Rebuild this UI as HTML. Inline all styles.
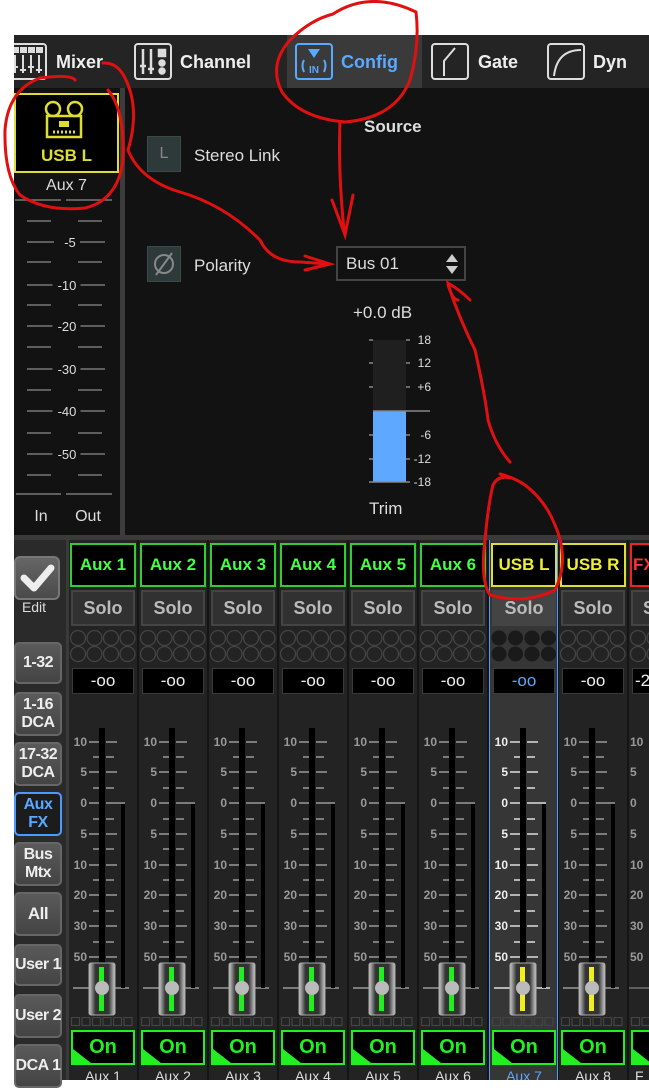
<!DOCTYPE html>
<html><head><meta charset="utf-8"><style>
*{margin:0;padding:0;box-sizing:border-box}
body{width:649px;height:1080px;overflow:hidden;background:#fff;font-family:"Liberation Sans",sans-serif;position:relative}
.a{position:absolute}
.ico{position:absolute;top:8px;width:38px;height:37px;border:2px solid #ddd;border-radius:4px}
.tt{position:absolute;top:16px;color:#eee;font-weight:bold;font-size:18px}
.lb{position:absolute;left:14px;width:48px;border:2px solid #666;border-radius:5px;background:linear-gradient(#5a5a5a,#444);color:#eee;font-weight:bold;font-size:16px;text-align:center;line-height:18px;display:flex;align-items:center;justify-content:center;letter-spacing:-0.5px;white-space:nowrap}
.st{position:absolute;top:540px;width:68px;height:540px;background:#232323;overflow:hidden}
.nm{position:absolute;left:1px;top:3px;width:66px;height:44px;border:2px solid #3c3;background:#000;color:#4f4;font-weight:bold;font-size:17px;text-align:center;line-height:40px;white-space:nowrap}
.so{position:absolute;left:2px;top:50px;width:64px;height:36px;border:2px solid #444;background:#313131;color:#bbb;font-weight:bold;font-size:18px;text-align:center;line-height:32px}
.va{position:absolute;left:3px;top:128px;width:62px;height:26px;border:1px solid #3a3a3a;background:#000;color:#eee;font-size:17px;text-align:center;line-height:24px}
.on{position:absolute;left:2px;top:490px;width:64px;height:35px;border:2px solid #2e2;background:#000;color:#2e2;font-weight:bold;font-size:20px;text-align:center;line-height:31px;overflow:hidden}
.on:after{content:"";position:absolute;left:0;bottom:0;border-left:18px solid #2e2;border-top:14px solid transparent}
.lab{position:absolute;left:0;width:68px;top:528px;color:#ddd;font-size:14px;text-align:center}
</style></head><body>
<svg width="0" height="0" style="position:absolute"><defs>
<g id="cir" fill="none" stroke="#444" stroke-width="1.3">
<circle cx="9" cy="8" r="7.5"/><circle cx="25.5" cy="8" r="7.5"/><circle cx="42" cy="8" r="7.5"/><circle cx="58.5" cy="8" r="7.5"/>
<circle cx="9" cy="24" r="7.5"/><circle cx="25.5" cy="24" r="7.5"/><circle cx="42" cy="24" r="7.5"/><circle cx="58.5" cy="24" r="7.5"/></g>
<g id="sq" fill="none" stroke="#444" stroke-width="1.2"><rect x="2.5" y="0.5" width="8" height="8"/><rect x="13" y="0.5" width="8" height="8"/><rect x="23.5" y="0.5" width="8" height="8"/><rect x="34" y="0.5" width="8" height="8"/><rect x="44.5" y="0.5" width="8" height="8"/><rect x="55" y="0.5" width="8" height="8"/></g>
<linearGradient id="kn" x1="0" x2="1"><stop offset="0" stop-color="#ccc"/><stop offset=".25" stop-color="#333"/><stop offset=".75" stop-color="#333"/><stop offset="1" stop-color="#ccc"/></linearGradient>
</defs></svg>

<!-- top bar -->
<div class="a" style="left:14px;top:35px;width:635px;height:53px;background:#242424"></div>
<div class="a" style="left:287px;top:35px;width:135px;height:53px;background:#3a3a3a"></div>
<div class="ico" style="left:8px;top:43px;width:39px">
<svg width="36" height="33"><g stroke="#ddd" stroke-width="2"><rect x="3" y="3" width="5" height="4" fill="#ddd"/><rect x="11" y="3" width="5" height="4" fill="#ddd"/><rect x="19" y="3" width="5" height="4" fill="#ddd"/><rect x="27" y="3" width="5" height="4" fill="#ddd"/><path d="M5 10v18M13 10v18M21 10v18M29 10v18M2 22h6M10 25h6M18 22h6M26 25h6"/></g></svg></div>
<div class="tt" style="left:56px;top:52px">Mixer</div>
<div class="ico" style="left:134px;top:43px"><svg width="34" height="33"><g stroke="#ddd" stroke-width="2.5" fill="#ddd"><path d="M7 4v25M15 4v25M4 21h6M12 24h6"/><rect x="23" y="5" width="6" height="6"/><circle cx="26" cy="18" r="2.5"/><circle cx="26" cy="26" r="2.5"/></g></svg></div>
<div class="tt" style="left:180px;top:52px">Channel</div>
<div class="ico" style="left:295px;top:43px;border-color:#5aa8ff"><svg width="34" height="33"><path d="M11 4h12l-6 9z" fill="#5aa8ff"/><text x="17" y="28" fill="#5aa8ff" font-size="10" font-weight="bold" text-anchor="middle" font-family="Liberation Sans">IN</text><path d="M7 15q-3 5 0 12M27 15q3 5 0 12" stroke="#5aa8ff" stroke-width="2" fill="none"/></svg></div>
<div class="tt" style="left:341px;top:52px;color:#5aa8ff">Config</div>
<div class="ico" style="left:431px;top:43px"><svg width="34" height="33"><path d="M11 31V16L22 3" stroke="#ddd" stroke-width="2" fill="none"/></svg></div>
<div class="tt" style="left:478px;top:52px">Gate</div>
<div class="ico" style="left:547px;top:43px"><svg width="34" height="33"><path d="M5 31Q8 5 32 5" stroke="#ddd" stroke-width="2" fill="none"/></svg></div>
<div class="tt" style="left:593px;top:52px">Dyn</div>

<!-- main -->
<div class="a" style="left:14px;top:88px;width:635px;height:449px;background:#121212"></div>
<div class="a" style="left:120px;top:88px;width:5px;height:449px;background:#3c3c3c"></div>
<div class="a" style="left:14px;top:535px;width:635px;height:5px;background:#3a3a3a"></div>
<div class="a" style="left:14px;top:93px;width:105px;height:80px;border:2px solid #dd3;background:#000"></div>
<svg class="a" style="left:44px;top:99px" width="42" height="42"><g stroke="#dd3" stroke-width="2.5" fill="none"><circle cx="9" cy="10" r="7"/><circle cx="31" cy="10" r="7"/><rect x="3" y="17" width="34" height="21"/></g><rect x="15" y="22" width="10" height="6" fill="#dd3"/><path d="M9 33h22" stroke="#dd3" stroke-width="3" stroke-dasharray="2 2"/></svg>
<div class="a" style="left:14px;top:146px;width:105px;text-align:center;color:#dd3;font-weight:bold;font-size:17px">USB L</div>
<div class="a" style="left:14px;top:177px;width:105px;text-align:center;color:#ddd;font-size:16px">Aux 7</div>
<svg class="a" style="left:14px;top:190px" width="106" height="345">
<g stroke="#777" stroke-width="1.5"><path d="M1 10h46M52 10h46M13 31h24M64 31h24M13 72h24M64 72h24M13 115h24M64 115h24M13 157h24M64 157h24M13 200h24M64 200h24M13 243h24M64 243h24M13 285h24M64 285h24M2 304h45M52 304h46"/>
<path d="M13 52h27M66 52h25M13 95h26M66 95h25M13 136h26M66 136h25M13 179h26M66 179h25M13 221h26M66 221h25M13 264h26M66 264h25"/></g>
<g font-size="13" font-family="Liberation Sans" text-anchor="middle"><g fill="#121212" stroke="#121212"><rect x="41" y="43" width="24" height="16"/><rect x="39" y="86" width="27" height="16"/><rect x="39" y="127" width="27" height="16"/><rect x="39" y="170" width="27" height="16"/><rect x="39" y="212" width="27" height="16"/><rect x="39" y="255" width="27" height="16"/></g><g fill="#ddd"><text x="56" y="57">-5</text><text x="53" y="100">-10</text><text x="53" y="141">-20</text><text x="53" y="184">-30</text><text x="53" y="226">-40</text><text x="53" y="269">-50</text></g></g>
<g fill="#ddd" font-size="16" font-family="Liberation Sans" text-anchor="middle"><text x="27" y="331">In</text><text x="74" y="331">Out</text></g></svg>

<div class="a" style="left:147px;top:136px;width:34px;height:36px;background:#2e3a3a;border:1px solid #3a4a4a;color:#888;font-size:16px;text-align:center;line-height:34px">L</div>
<div class="a" style="left:194px;top:146px;color:#ddd;font-size:17px">Stereo Link</div>
<div class="a" style="left:147px;top:246px;width:34px;height:36px;background:#2e3a3a;border:1px solid #3a4a4a"><svg width="32" height="34"><circle cx="16" cy="17" r="9" stroke="#888" stroke-width="2" fill="none"/><path d="M8 28L24 6" stroke="#888" stroke-width="2"/></svg></div>
<div class="a" style="left:194px;top:256px;color:#ddd;font-size:17px">Polarity</div>
<div class="a" style="left:364px;top:117px;color:#ddd;font-size:17px;font-weight:bold">Source</div>
<div class="a" style="left:336px;top:246px;width:130px;height:35px;border:2px solid #444;background:#111;color:#ddd;font-size:17px;line-height:31px;padding-left:8px">Bus 01</div>
<svg class="a" style="left:444px;top:253px" width="16" height="22"><path d="M2 9l6-8 6 8zM2 13l6 8 6-8z" fill="#ccc"/></svg>
<div class="a" style="left:353px;top:303px;color:#ddd;font-size:17px">+0.0 dB</div>
<svg class="a" style="left:360px;top:330px" width="90" height="160"><rect x="13" y="10" width="33" height="70" fill="#1f1f1f"/><rect x="13" y="81" width="33" height="71" fill="#5fa8ff"/>
<g stroke="#888" stroke-width="1.5"><path d="M9 10h4M46 10h4M9 33h4M46 33h4M9 57h4M46 57h4M13 81h57M9 105h4M46 105h4M9 129h4M46 129h4M9 152h41"/></g>
<g fill="#ddd" font-size="12" font-family="Liberation Sans" text-anchor="end"><text x="71" y="14">18</text><text x="71" y="37">12</text><text x="71" y="61">+6</text><text x="71" y="109">-6</text><text x="71" y="133">-12</text><text x="71" y="156">-18</text></g></svg>
<div class="a" style="left:369px;top:499px;color:#ddd;font-size:17px">Trim</div>

<!-- bottom -->
<div class="a" style="left:14px;top:540px;width:635px;height:540px;background:#151515"></div>
<div class="a" style="left:14px;top:540px;width:52px;height:540px;background:#2a2a2a"></div>
<div class="a" style="left:66px;top:540px;width:3px;height:540px;background:#3a3a3a"></div>
<div class="a" style="left:14px;top:556px;width:46px;height:44px;border-radius:6px;background:linear-gradient(#666,#4a4a4a);border:2px solid #777"><svg width="44" height="40"><path d="M8 20l10 10 17-20" stroke="#eee" stroke-width="7" fill="none" stroke-linecap="round" stroke-linejoin="round"/></svg></div>
<div class="a" style="left:14px;top:599px;width:40px;text-align:center;color:#ddd;font-size:14px">Edit</div>
<div class="lb" style="top:642px;height:42px">1-32</div>
<div class="lb" style="top:692px;height:44px">1-16<br>DCA</div>
<div class="lb" style="top:742px;height:44px">17-32<br>DCA</div>
<div class="lb" style="top:792px;height:44px;border-color:#4a9aff;color:#5aa8ff;background:#1c1c1c">Aux<br>FX</div>
<div class="lb" style="top:842px;height:44px">Bus<br>Mtx</div>
<div class="lb" style="top:892px;height:44px;font-size:17px">All</div>
<div class="lb" style="top:944px;height:42px">User 1</div>
<div class="lb" style="top:994px;height:44px">User 2</div>
<div class="lb" style="top:1044px;height:44px">DCA 1</div>

<div class="st" style="left:69px"><div class="nm">Aux 1</div><div class="so">Solo</div><svg class="a" style="top:90px" width="68" height="34"><use href="#cir"/></svg><div class="va">-oo</div>
<svg class="a" style="top:180px" width="68" height="300"><g stroke="#999" stroke-width="1.5"><path d="M20 22h10M37 22h11M20 52h10M37 52h11M20 83h10M37 83h11M20 114h10M37 114h11M20 145h10M37 145h11M20 175h10M37 175h11M20 206h10M37 206h11M20 237h10M37 237h11M24 37h6M37 37h8M24 68h6M37 68h8M24 99h6M37 99h8M24 129h6M37 129h8M24 160h6M37 160h8M24 191h6M37 191h8M24 222h6M37 222h8M37 83h19M4 268h56"/></g><rect x="30" y="8" width="6" height="262" fill="#000"/><rect x="52" y="84" width="4" height="184" fill="#000"/><g fill="#999" font-size="12" font-weight="bold" font-family="Liberation Sans" text-anchor="end"><text x="18" y="26">10</text><text x="18" y="56">5</text><text x="18" y="87">0</text><text x="18" y="118">5</text><text x="18" y="149">10</text><text x="18" y="179">20</text><text x="18" y="210">30</text><text x="18" y="241">50</text></g><rect x="20" y="243" width="26" height="52" rx="2" fill="url(#kn)" stroke="#aaa"/><rect x="30" y="247" width="5" height="44" fill="#2e2"/><circle cx="33" cy="268" r="7" fill="#bbb"/></svg>
<svg class="a" style="top:477px" width="68" height="10"><use href="#sq"/></svg><div class="on">On</div><div class="lab">Aux 1</div></div>

<div class="st" style="left:139px"><div class="nm">Aux 2</div><div class="so">Solo</div><svg class="a" style="top:90px" width="68" height="34"><use href="#cir"/></svg><div class="va">-oo</div>
<svg class="a" style="top:180px" width="68" height="300"><g stroke="#999" stroke-width="1.5"><path d="M20 22h10M37 22h11M20 52h10M37 52h11M20 83h10M37 83h11M20 114h10M37 114h11M20 145h10M37 145h11M20 175h10M37 175h11M20 206h10M37 206h11M20 237h10M37 237h11M24 37h6M37 37h8M24 68h6M37 68h8M24 99h6M37 99h8M24 129h6M37 129h8M24 160h6M37 160h8M24 191h6M37 191h8M24 222h6M37 222h8M37 83h19M4 268h56"/></g><rect x="30" y="8" width="6" height="262" fill="#000"/><rect x="52" y="84" width="4" height="184" fill="#000"/><g fill="#999" font-size="12" font-weight="bold" font-family="Liberation Sans" text-anchor="end"><text x="18" y="26">10</text><text x="18" y="56">5</text><text x="18" y="87">0</text><text x="18" y="118">5</text><text x="18" y="149">10</text><text x="18" y="179">20</text><text x="18" y="210">30</text><text x="18" y="241">50</text></g><rect x="20" y="243" width="26" height="52" rx="2" fill="url(#kn)" stroke="#aaa"/><rect x="30" y="247" width="5" height="44" fill="#2e2"/><circle cx="33" cy="268" r="7" fill="#bbb"/></svg>
<svg class="a" style="top:477px" width="68" height="10"><use href="#sq"/></svg><div class="on">On</div><div class="lab">Aux 2</div></div>

<div class="st" style="left:209px"><div class="nm">Aux 3</div><div class="so">Solo</div><svg class="a" style="top:90px" width="68" height="34"><use href="#cir"/></svg><div class="va">-oo</div>
<svg class="a" style="top:180px" width="68" height="300"><g stroke="#999" stroke-width="1.5"><path d="M20 22h10M37 22h11M20 52h10M37 52h11M20 83h10M37 83h11M20 114h10M37 114h11M20 145h10M37 145h11M20 175h10M37 175h11M20 206h10M37 206h11M20 237h10M37 237h11M24 37h6M37 37h8M24 68h6M37 68h8M24 99h6M37 99h8M24 129h6M37 129h8M24 160h6M37 160h8M24 191h6M37 191h8M24 222h6M37 222h8M37 83h19M4 268h56"/></g><rect x="30" y="8" width="6" height="262" fill="#000"/><rect x="52" y="84" width="4" height="184" fill="#000"/><g fill="#999" font-size="12" font-weight="bold" font-family="Liberation Sans" text-anchor="end"><text x="18" y="26">10</text><text x="18" y="56">5</text><text x="18" y="87">0</text><text x="18" y="118">5</text><text x="18" y="149">10</text><text x="18" y="179">20</text><text x="18" y="210">30</text><text x="18" y="241">50</text></g><rect x="20" y="243" width="26" height="52" rx="2" fill="url(#kn)" stroke="#aaa"/><rect x="30" y="247" width="5" height="44" fill="#2e2"/><circle cx="33" cy="268" r="7" fill="#bbb"/></svg>
<svg class="a" style="top:477px" width="68" height="10"><use href="#sq"/></svg><div class="on">On</div><div class="lab">Aux 3</div></div>

<div class="st" style="left:279px"><div class="nm">Aux 4</div><div class="so">Solo</div><svg class="a" style="top:90px" width="68" height="34"><use href="#cir"/></svg><div class="va">-oo</div>
<svg class="a" style="top:180px" width="68" height="300"><g stroke="#999" stroke-width="1.5"><path d="M20 22h10M37 22h11M20 52h10M37 52h11M20 83h10M37 83h11M20 114h10M37 114h11M20 145h10M37 145h11M20 175h10M37 175h11M20 206h10M37 206h11M20 237h10M37 237h11M24 37h6M37 37h8M24 68h6M37 68h8M24 99h6M37 99h8M24 129h6M37 129h8M24 160h6M37 160h8M24 191h6M37 191h8M24 222h6M37 222h8M37 83h19M4 268h56"/></g><rect x="30" y="8" width="6" height="262" fill="#000"/><rect x="52" y="84" width="4" height="184" fill="#000"/><g fill="#999" font-size="12" font-weight="bold" font-family="Liberation Sans" text-anchor="end"><text x="18" y="26">10</text><text x="18" y="56">5</text><text x="18" y="87">0</text><text x="18" y="118">5</text><text x="18" y="149">10</text><text x="18" y="179">20</text><text x="18" y="210">30</text><text x="18" y="241">50</text></g><rect x="20" y="243" width="26" height="52" rx="2" fill="url(#kn)" stroke="#aaa"/><rect x="30" y="247" width="5" height="44" fill="#2e2"/><circle cx="33" cy="268" r="7" fill="#bbb"/></svg>
<svg class="a" style="top:477px" width="68" height="10"><use href="#sq"/></svg><div class="on">On</div><div class="lab">Aux 4</div></div>

<div class="st" style="left:349px"><div class="nm">Aux 5</div><div class="so">Solo</div><svg class="a" style="top:90px" width="68" height="34"><use href="#cir"/></svg><div class="va">-oo</div>
<svg class="a" style="top:180px" width="68" height="300"><g stroke="#999" stroke-width="1.5"><path d="M20 22h10M37 22h11M20 52h10M37 52h11M20 83h10M37 83h11M20 114h10M37 114h11M20 145h10M37 145h11M20 175h10M37 175h11M20 206h10M37 206h11M20 237h10M37 237h11M24 37h6M37 37h8M24 68h6M37 68h8M24 99h6M37 99h8M24 129h6M37 129h8M24 160h6M37 160h8M24 191h6M37 191h8M24 222h6M37 222h8M37 83h19M4 268h56"/></g><rect x="30" y="8" width="6" height="262" fill="#000"/><rect x="52" y="84" width="4" height="184" fill="#000"/><g fill="#999" font-size="12" font-weight="bold" font-family="Liberation Sans" text-anchor="end"><text x="18" y="26">10</text><text x="18" y="56">5</text><text x="18" y="87">0</text><text x="18" y="118">5</text><text x="18" y="149">10</text><text x="18" y="179">20</text><text x="18" y="210">30</text><text x="18" y="241">50</text></g><rect x="20" y="243" width="26" height="52" rx="2" fill="url(#kn)" stroke="#aaa"/><rect x="30" y="247" width="5" height="44" fill="#2e2"/><circle cx="33" cy="268" r="7" fill="#bbb"/></svg>
<svg class="a" style="top:477px" width="68" height="10"><use href="#sq"/></svg><div class="on">On</div><div class="lab">Aux 5</div></div>

<div class="st" style="left:419px"><div class="nm">Aux 6</div><div class="so">Solo</div><svg class="a" style="top:90px" width="68" height="34"><use href="#cir"/></svg><div class="va">-oo</div>
<svg class="a" style="top:180px" width="68" height="300"><g stroke="#999" stroke-width="1.5"><path d="M20 22h10M37 22h11M20 52h10M37 52h11M20 83h10M37 83h11M20 114h10M37 114h11M20 145h10M37 145h11M20 175h10M37 175h11M20 206h10M37 206h11M20 237h10M37 237h11M24 37h6M37 37h8M24 68h6M37 68h8M24 99h6M37 99h8M24 129h6M37 129h8M24 160h6M37 160h8M24 191h6M37 191h8M24 222h6M37 222h8M37 83h19M4 268h56"/></g><rect x="30" y="8" width="6" height="262" fill="#000"/><rect x="52" y="84" width="4" height="184" fill="#000"/><g fill="#999" font-size="12" font-weight="bold" font-family="Liberation Sans" text-anchor="end"><text x="18" y="26">10</text><text x="18" y="56">5</text><text x="18" y="87">0</text><text x="18" y="118">5</text><text x="18" y="149">10</text><text x="18" y="179">20</text><text x="18" y="210">30</text><text x="18" y="241">50</text></g><rect x="20" y="243" width="26" height="52" rx="2" fill="url(#kn)" stroke="#aaa"/><rect x="30" y="247" width="5" height="44" fill="#2e2"/><circle cx="33" cy="268" r="7" fill="#bbb"/></svg>
<svg class="a" style="top:477px" width="68" height="10"><use href="#sq"/></svg><div class="on">On</div><div class="lab">Aux 6</div></div>

<div class="st" style="left:489px;background:#363636;border-left:1px solid #4a9aff;border-right:1px solid #4a9aff;width:69px"><div class="nm" style="border-color:#dd3;color:#ee3">USB L</div><div class="so" style="background:#444">Solo</div><svg class="a" style="top:90px" width="68" height="34"><g fill="#1a1a1a"><circle cx="9" cy="8" r="7.5"/><circle cx="25.5" cy="8" r="7.5"/><circle cx="42" cy="8" r="7.5"/><circle cx="58.5" cy="8" r="7.5"/><circle cx="9" cy="24" r="7.5"/><circle cx="25.5" cy="24" r="7.5"/><circle cx="42" cy="24" r="7.5"/><circle cx="58.5" cy="24" r="7.5"/></g></svg><div class="va" style="color:#5aa8ff">-oo</div>
<svg class="a" style="top:180px" width="68" height="300"><g stroke="#ddd" stroke-width="1.5"><path d="M20 22h10M37 22h11M20 52h10M37 52h11M20 83h10M37 83h11M20 114h10M37 114h11M20 145h10M37 145h11M20 175h10M37 175h11M20 206h10M37 206h11M20 237h10M37 237h11M24 37h6M37 37h8M24 68h6M37 68h8M24 99h6M37 99h8M24 129h6M37 129h8M24 160h6M37 160h8M24 191h6M37 191h8M24 222h6M37 222h8M37 83h19M4 268h56"/></g><rect x="30" y="8" width="6" height="262" fill="#000"/><rect x="52" y="84" width="4" height="184" fill="#000"/><g fill="#eee" font-size="12" font-weight="bold" font-family="Liberation Sans" text-anchor="end"><text x="18" y="26">10</text><text x="18" y="56">5</text><text x="18" y="87">0</text><text x="18" y="118">5</text><text x="18" y="149">10</text><text x="18" y="179">20</text><text x="18" y="210">30</text><text x="18" y="241">50</text></g><rect x="20" y="243" width="26" height="52" rx="2" fill="url(#kn)" stroke="#aaa"/><rect x="30" y="247" width="5" height="44" fill="#ee2"/><circle cx="33" cy="268" r="7" fill="#bbb"/></svg>
<svg class="a" style="top:477px" width="68" height="10"><use href="#sq"/></svg><div class="on">On</div><div class="lab" style="color:#5aa8ff">Aux 7</div></div>

<div class="st" style="left:559px"><div class="nm" style="border-color:#dd3;color:#ee3">USB R</div><div class="so">Solo</div><svg class="a" style="top:90px" width="68" height="34"><use href="#cir"/></svg><div class="va">-oo</div>
<svg class="a" style="top:180px" width="68" height="300"><g stroke="#999" stroke-width="1.5"><path d="M20 22h10M37 22h11M20 52h10M37 52h11M20 83h10M37 83h11M20 114h10M37 114h11M20 145h10M37 145h11M20 175h10M37 175h11M20 206h10M37 206h11M20 237h10M37 237h11M24 37h6M37 37h8M24 68h6M37 68h8M24 99h6M37 99h8M24 129h6M37 129h8M24 160h6M37 160h8M24 191h6M37 191h8M24 222h6M37 222h8M37 83h19M4 268h56"/></g><rect x="30" y="8" width="6" height="262" fill="#000"/><rect x="52" y="84" width="4" height="184" fill="#000"/><g fill="#999" font-size="12" font-weight="bold" font-family="Liberation Sans" text-anchor="end"><text x="18" y="26">10</text><text x="18" y="56">5</text><text x="18" y="87">0</text><text x="18" y="118">5</text><text x="18" y="149">10</text><text x="18" y="179">20</text><text x="18" y="210">30</text><text x="18" y="241">50</text></g><rect x="20" y="243" width="26" height="52" rx="2" fill="url(#kn)" stroke="#aaa"/><rect x="30" y="247" width="5" height="44" fill="#ee2"/><circle cx="33" cy="268" r="7" fill="#bbb"/></svg>
<svg class="a" style="top:477px" width="68" height="10"><use href="#sq"/></svg><div class="on">On</div><div class="lab">Aux 8</div></div>

<div class="st" style="left:629px;width:20px"><div class="nm" style="border-color:#e22;color:#f33;text-align:left;padding-left:1px;width:70px">FX</div><div class="so" style="text-align:left;padding-left:10px;width:70px">S</div><svg class="a" style="top:90px" width="68" height="34"><use href="#cir"/></svg><div class="va" style="text-align:left;width:70px;padding-left:2px">-2</div>
<svg class="a" style="top:180px" width="68" height="300"><g fill="#999" font-size="12" font-weight="bold" font-family="Liberation Sans"><text x="1" y="26">10</text><text x="1" y="56">5</text><text x="1" y="87">0</text><text x="1" y="118">5</text><text x="1" y="149">10</text><text x="1" y="179">20</text><text x="1" y="210">30</text><text x="1" y="241">50</text></g><path d="M0 268h20" stroke="#999"/></svg>
<svg class="a" style="top:477px" width="68" height="10"><use href="#sq"/></svg><div class="on" style="width:70px"></div><div class="lab" style="text-align:left;padding-left:6px">F</div></div>

<!-- left white edge -->
<div class="a" style="left:0;top:35px;width:14px;height:1045px;background:#fff"></div>

<!-- red annotations -->
<svg class="a" style="left:0;top:0" width="649" height="1080" fill="none" stroke="#e01010" stroke-width="3" stroke-linecap="round">
<path d="M75 80Q72 74 40 78Q8 90 5 130Q4 175 20 195Q45 212 85 208Q118 200 123 160Q125 110 108 90"/>
<path d="M103 63Q118 62 126 80Q140 110 128 150Q140 180 180 192Q225 205 260 240Q270 262 300 262L330 264M305 256l25 8-25 6"/>
<path d="M333 14Q310 20 290 40Q268 65 282 92Q300 118 345 122Q395 118 410 80Q420 45 416 12Q370 -10 333 14"/>
<path d="M340 122Q338 170 344 230M332 200l13 35 8-40"/>
<path d="M458 300Q452 300 448 283Q460 290 470 300M448 285Q460 320 475 350Q485 395 488 420Q495 445 510 462"/>
<path d="M500 474Q515 478 525 485Q545 500 555 525Q570 560 555 590Q525 605 490 595Q480 580 485 540Q488 505 493 485Q498 475 510 478"/>
</svg>
</body></html>
